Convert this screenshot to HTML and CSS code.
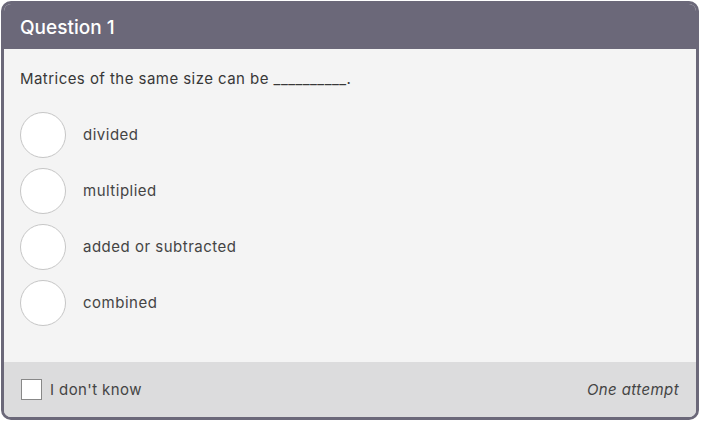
FILE: index.html
```html
<!DOCTYPE html>
<html lang="en">
<head>
    <meta charset="UTF-8">
    <meta name="viewport" content="width=device-width, initial-scale=1.0">
    <title>Question 1</title>
    <link rel="stylesheet" href="styles.css">
</head>
<body>
    <div class="card">
        <div class="card-header">
            <h2>Question 1</h2>
        </div>

        <div class="card-body">
            <p class="question">Matrices of the same size can be __________.</p>
            <ul class="options">
                <li><span class="radio"></span>divided</li>
                <li><span class="radio"></span>multiplied</li>
                <li><span class="radio"></span>added or subtracted</li>
                <li><span class="radio"></span>combined</li>
            </ul>
        </div>

        <div class="card-footer">
            <label class="dont-know"><span class="box"></span>I don't know</label>
            <span class="attempts">One attempt</span>
        </div>
    </div>
</body>
</html>
```

FILE: styles.css
```css
body {
    margin: 1px;
    font-family: Inter, "Noto Sans", sans-serif;
    background-color: #fff;
}

.card {
    width: 692px;
    height: 413px;
    border: 3px solid #6b6879;
    border-radius: 10px;
    overflow: hidden;
    display: flex;
    flex-direction: column;
    background-color: #f4f4f4;
}

.card-header {
    background-color: #6b6879;
    height: 45px;
    display: flex;
    align-items: center;
    padding-left: 16px;
}
.card-header h2 {
    margin: 0;
    color: #fff;
    font-size: 19px;
    font-weight: 500;
    margin-top: 2px;
}

.card-body {
    flex: 1;
    padding: 0 16px;
}

.question {
    margin: 20px 0 23px;
    font-size: 15px;
    letter-spacing: 0.45px;
    color: #383838;
}

.options {
    list-style-type: none;
    margin: 0;
    padding: 0;
}

.options li {
    display: flex;
    align-items: center;
    height: 47px;
    margin-bottom: 9px;
    font-size: 15px;
    letter-spacing: 0.5px;
    color: #444;
}

.radio {
    width: 44px;
    height: 44px;
    border: 1.5px solid #c6c6c6;
    border-radius: 50%;
    background-color: #fff;
    margin-right: 17px;
    flex-shrink: 0;
}

.card-footer {
    background-color: #dcdcdd;
    height: 55px;
    display: flex;
    align-items: center;
    justify-content: space-between;
    padding: 0 17px;
    font-size: 15px;
    letter-spacing: 0.4px;
    color: #444;
}

.dont-know {
    display: flex;
    align-items: center;
}

.box {
    width: 19px;
    height: 19px;
    border: 1.5px solid #888;
    background-color: #fff;
    margin-right: 8px;
}

.attempts {
    font-style: italic;
}
```
